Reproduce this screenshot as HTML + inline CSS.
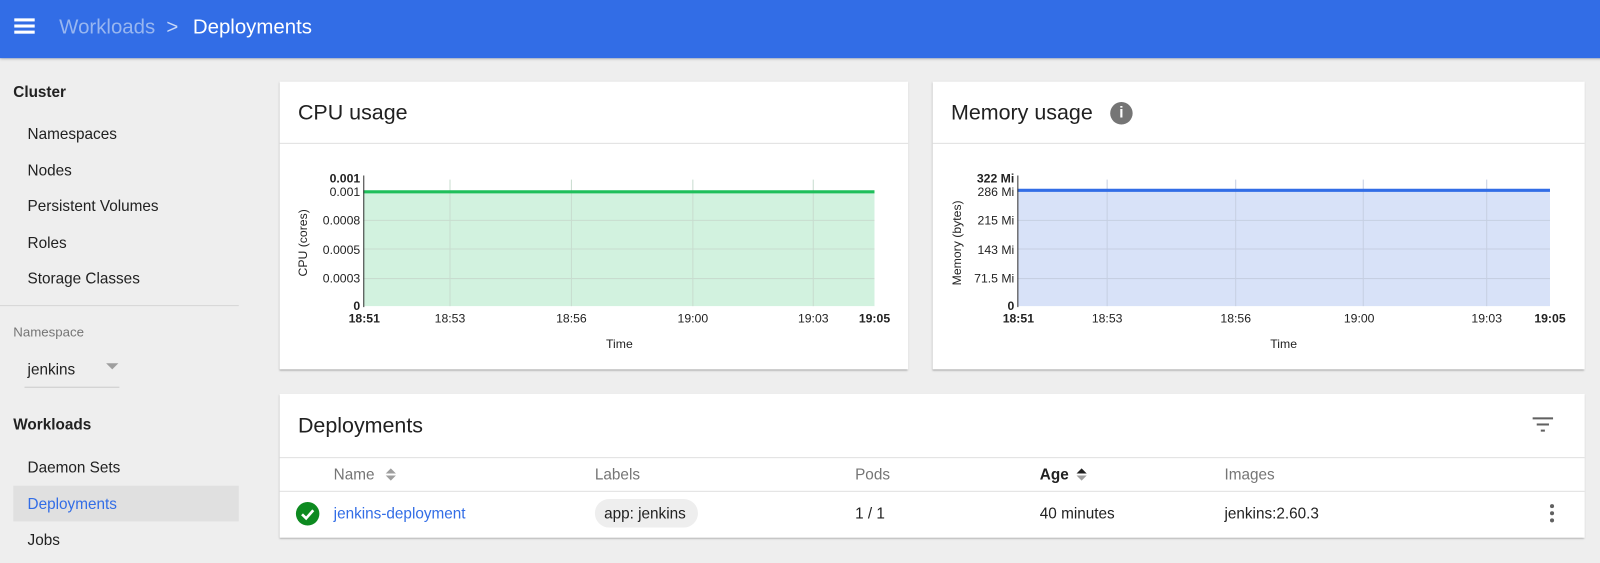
<!DOCTYPE html>
<html><head><style>
*{margin:0;padding:0;box-sizing:border-box}
html,body{width:1600px;height:552px;overflow:hidden;background:#eeeeee}
#w{position:absolute;left:0;top:0;width:1568px;height:541px;transform:scale(1.0204);transform-origin:0 0;font-family:"Liberation Sans",sans-serif;color:#212121}
.hdr{position:absolute;left:0;top:0;width:1600px;height:57px;background:#326de6;box-shadow:0 1px 3px rgba(0,0,0,.3)}
.abs{position:absolute;white-space:nowrap}
.card{position:absolute;background:#fff;box-shadow:0 1px 2px rgba(0,0,0,.25),0 1px 1px rgba(0,0,0,.1)}
.hl{position:absolute;left:0;right:0;height:1px;background:#e0e0e0}
.nav{font-size:15px;color:#212121}
</style></head><body><div id="w">
<div class="hdr">
 <div class="abs" style="left:14px;top:18px;width:20px;height:3px;background:#fff"></div>
 <div class="abs" style="left:14px;top:24px;width:20px;height:3px;background:#fff"></div>
 <div class="abs" style="left:14px;top:30px;width:20px;height:3px;background:#fff"></div>
 <div class="abs" style="left:58px;top:16px;font-size:20px;color:#98b6f0">Workloads</div>
 <div class="abs" style="left:163px;top:16px;font-size:20px;color:#c8d8f8">&gt;</div>
 <div class="abs" style="left:189px;top:16px;font-size:20px;color:#fff">Deployments</div>
</div>

<div class="abs" style="left:13px;top:82px;font-size:15px;font-weight:600;color:#212121">Cluster</div>
<div class="abs nav" style="left:27px;top:123px">Namespaces</div>
<div class="abs nav" style="left:27px;top:159px">Nodes</div>
<div class="abs nav" style="left:27px;top:194px">Persistent Volumes</div>
<div class="abs nav" style="left:27px;top:230px">Roles</div>
<div class="abs nav" style="left:27px;top:265px">Storage Classes</div>
<div class="abs" style="left:0;top:299px;width:234px;height:1px;background:#d6d6d6"></div>
<div class="abs" style="left:13px;top:318px;font-size:13px;color:#757575">Namespace</div>
<div class="abs nav" style="left:27px;top:354px">jenkins</div>
<div class="abs" style="left:104px;top:356px;width:0;height:0;border-left:6px solid transparent;border-right:6px solid transparent;border-top:6px solid #9e9e9e"></div>
<div class="abs" style="left:24px;top:379px;width:93px;height:1px;background:#ccc"></div>
<div class="abs" style="left:13px;top:408px;font-size:15px;font-weight:600">Workloads</div>
<div class="abs nav" style="left:27px;top:450px">Daemon Sets</div>
<div class="abs" style="left:13px;top:476px;width:221px;height:35px;background:#e0e0e0"></div>
<div class="abs nav" style="left:27px;top:486px;color:#326de6">Deployments</div>
<div class="abs nav" style="left:27px;top:521px">Jobs</div>

<div class="card" style="left:274px;top:80px;width:616px;height:282px">
 <div class="abs" style="left:18px;top:19px;font-size:21px">CPU usage</div>
 <div class="hl" style="top:60px"></div>
</div>
<svg class="abs" style="left:0;top:0" width="1600" height="552" font-family="Liberation Sans, sans-serif" font-size="12">
 <rect x="356" y="188" width="501" height="112" fill="#d2f2df"/>
 <g stroke="#c8dccf" stroke-width="1">
  <line x1="441" y1="176" x2="441" y2="300"/><line x1="560" y1="176" x2="560" y2="300"/><line x1="679" y1="176" x2="679" y2="300"/><line x1="797" y1="176" x2="797" y2="300"/>
  <line x1="356" y1="216" x2="857" y2="216"/><line x1="356" y1="244" x2="857" y2="244"/><line x1="356" y1="273" x2="857" y2="273"/>
 </g>
 <line x1="356" y1="188" x2="857" y2="188" stroke="#1fbf5b" stroke-width="3"/>
 <line x1="356.5" y1="172" x2="356.5" y2="301" stroke="#333"/>
 <g text-anchor="end" fill="#222">
  <text x="353" y="179" font-weight="bold">0.001</text><text x="353" y="192">0.001</text><text x="353" y="220">0.0008</text><text x="353" y="249">0.0005</text><text x="353" y="277">0.0003</text><text x="353" y="304" font-weight="bold">0</text>
 </g>
 <g text-anchor="middle" fill="#222">
  <text x="357" y="316" font-weight="bold">18:51</text><text x="441" y="316">18:53</text><text x="560" y="316">18:56</text><text x="679" y="316">19:00</text><text x="797" y="316">19:03</text><text x="857" y="316" font-weight="bold">19:05</text>
  <text x="607" y="341">Time</text>
  <text transform="translate(301,238) rotate(-90)">CPU (cores)</text>
 </g>
</svg>

<div class="card" style="left:914px;top:80px;width:639px;height:282px">
 <div class="abs" style="left:18px;top:19px;font-size:21px">Memory usage</div>
 <div class="abs" style="left:174px;top:20px;width:22px;height:22px;border-radius:50%;background:#757575;color:#fff;font-size:15px;font-weight:bold;text-align:center;line-height:22px">i</div>
 <div class="hl" style="top:60px"></div>
</div>
<svg class="abs" style="left:0;top:0" width="1600" height="552" font-family="Liberation Sans, sans-serif" font-size="12">
 <rect x="997" y="186" width="522" height="114" fill="#d8e2f8"/>
 <g stroke="#c6cfe2" stroke-width="1">
  <line x1="1085" y1="176" x2="1085" y2="300"/><line x1="1211" y1="176" x2="1211" y2="300"/><line x1="1336" y1="176" x2="1336" y2="300"/><line x1="1457" y1="176" x2="1457" y2="300"/>
  <line x1="997" y1="216" x2="1519" y2="216"/><line x1="997" y1="244" x2="1519" y2="244"/><line x1="997" y1="273" x2="1519" y2="273"/>
 </g>
 <line x1="997" y1="186.5" x2="1519" y2="186.5" stroke="#326de6" stroke-width="3"/>
 <line x1="997.5" y1="172" x2="997.5" y2="301" stroke="#333"/>
 <g text-anchor="end" fill="#222">
  <text x="994" y="179" font-weight="bold">322 Mi</text><text x="994" y="192">286 Mi</text><text x="994" y="220">215 Mi</text><text x="994" y="249">143 Mi</text><text x="994" y="277">71.5 Mi</text><text x="994" y="304" font-weight="bold">0</text>
 </g>
 <g text-anchor="middle" fill="#222">
  <text x="998" y="316" font-weight="bold">18:51</text><text x="1085" y="316">18:53</text><text x="1211" y="316">18:56</text><text x="1332" y="316">19:00</text><text x="1457" y="316">19:03</text><text x="1519" y="316" font-weight="bold">19:05</text>
  <text x="1258" y="341">Time</text>
  <text transform="translate(942,238) rotate(-90)">Memory (bytes)</text>
 </g>
</svg>

<div class="card" style="left:274px;top:386px;width:1279px;height:141px">
 <div class="abs" style="left:18px;top:20px;font-size:21px">Deployments</div>
 <div class="abs" style="left:1228px;top:23px;width:20px;height:2px;background:#616161"></div>
 <div class="abs" style="left:1232px;top:29px;width:12px;height:2px;background:#616161"></div>
 <div class="abs" style="left:1236px;top:35px;width:4px;height:2px;background:#616161"></div>
 <div class="hl" style="top:62px"></div>
 <div class="abs" style="left:53px;top:71px;font-size:15px;color:#757575">Name</div>
 <div class="abs" style="left:104px;top:73px;width:0;height:0;border-left:5px solid transparent;border-right:5px solid transparent;border-bottom:5px solid #9e9e9e"></div>
 <div class="abs" style="left:104px;top:80px;width:0;height:0;border-left:5px solid transparent;border-right:5px solid transparent;border-top:5px solid #9e9e9e"></div>
 <div class="abs" style="left:309px;top:71px;font-size:15px;color:#757575">Labels</div>
 <div class="abs" style="left:564px;top:71px;font-size:15px;color:#757575">Pods</div>
 <div class="abs" style="left:745px;top:71px;font-size:15px;color:#212121;font-weight:600">Age</div>
 <div class="abs" style="left:781px;top:73px;width:0;height:0;border-left:5px solid transparent;border-right:5px solid transparent;border-bottom:5px solid #212121"></div>
 <div class="abs" style="left:781px;top:80px;width:0;height:0;border-left:5px solid transparent;border-right:5px solid transparent;border-top:5px solid #9e9e9e"></div>
 <div class="abs" style="left:926px;top:71px;font-size:15px;color:#757575">Images</div>
 <div class="hl" style="top:95px"></div>
 <div class="abs" style="left:16px;top:106px;width:23px;height:23px;border-radius:50%;background:#0d8a20"></div>
 <svg class="abs" style="left:16px;top:106px" width="23" height="23"><path d="M6 12l4 4 7-8" stroke="#fff" stroke-width="2.6" fill="none"/></svg>
 <div class="abs" style="left:53px;top:109px;font-size:15px;color:#326de6">jenkins-deployment</div>
 <div class="abs" style="left:309px;top:103px;width:101px;height:28px;border-radius:14px;background:#eeeeee"></div>
 <div class="abs" style="left:318px;top:109px;font-size:15px">app: jenkins</div>
 <div class="abs" style="left:564px;top:109px;font-size:15px">1 / 1</div>
 <div class="abs" style="left:745px;top:109px;font-size:15px">40 minutes</div>
 <div class="abs" style="left:926px;top:109px;font-size:15px">jenkins:2.60.3</div>
 <div class="abs" style="left:1245px;top:108px;width:4px;height:4px;border-radius:50%;background:#616161"></div>
 <div class="abs" style="left:1245px;top:115px;width:4px;height:4px;border-radius:50%;background:#616161"></div>
 <div class="abs" style="left:1245px;top:122px;width:4px;height:4px;border-radius:50%;background:#616161"></div>
</div>
</div></body></html>
